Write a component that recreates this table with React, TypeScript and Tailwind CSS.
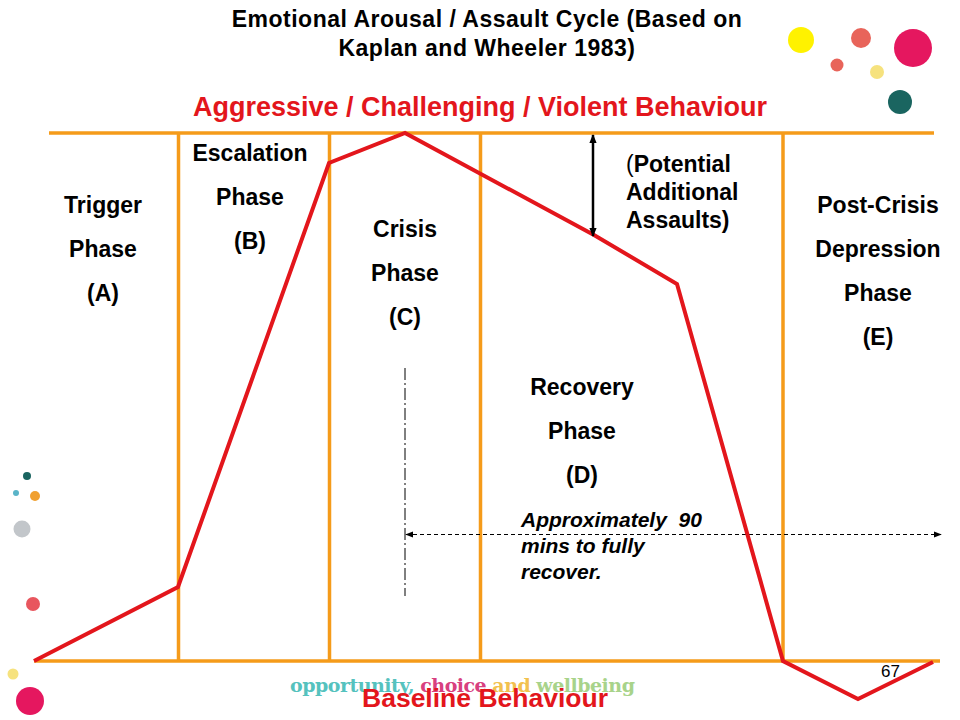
import React from "react";

export default function App() {
  return (
    <div className="relative w-[960px] h-[720px] bg-white overflow-hidden font-['Liberation_Sans',Arial,sans-serif] text-black">
      <svg className="absolute inset-0" width="960" height="720" viewBox="0 0 960 720">
        <defs>
          <marker id="ah" viewBox="0 0 10 10" refX="9" refY="5" markerWidth="8" markerHeight="8" orient="auto-start-reverse" markerUnits="userSpaceOnUse">
            <path d="M0 1 L10 5 L0 9 Z" fill="#000" />
          </marker>
          <marker id="ah2" viewBox="0 0 10 10" refX="9" refY="5" markerWidth="10" markerHeight="9" orient="auto-start-reverse" markerUnits="userSpaceOnUse">
            <path d="M0 1 L10 5 L0 9 Z" fill="#000" />
          </marker>
        </defs>
        {/* dots top right */}
        <circle cx="801" cy="40" r="13" fill="#fff200" />
        <circle cx="861" cy="38" r="10" fill="#e8645a" />
        <circle cx="837" cy="65" r="6.5" fill="#e8645a" />
        <circle cx="877" cy="72" r="7" fill="#f6e27e" />
        <ellipse cx="913" cy="48" rx="19" ry="19" fill="#e5175f" />
        <circle cx="900" cy="102" r="12" fill="#1a6560" />
        {/* dots left */}
        <circle cx="27" cy="476" r="4" fill="#1a6560" />
        <circle cx="16" cy="493" r="3" fill="#5ab4c8" />
        <circle cx="35" cy="496" r="5" fill="#f0a030" />
        <circle cx="22" cy="529" r="8.5" fill="#c2c6ca" />
        <circle cx="33" cy="604" r="7" fill="#e8565e" />
        <circle cx="13" cy="674" r="5.5" fill="#f6e27e" />
        <circle cx="30" cy="701" r="14" fill="#e5175f" />

        {/* orange frame */}
        <g stroke="#f59b1a" strokeWidth="3.5" fill="none">
          <line x1="49" y1="133" x2="934" y2="133" />
          <line x1="34" y1="661" x2="940" y2="661" />
          <line x1="178.5" y1="133" x2="178.5" y2="661" />
          <line x1="329.5" y1="133" x2="329.5" y2="661" />
          <line x1="480.5" y1="133" x2="480.5" y2="661" />
          <line x1="783" y1="133" x2="783" y2="661" />
        </g>

        {/* dash-dot vertical */}
        <line x1="405" y1="368" x2="405" y2="596" stroke="#000" strokeWidth="1" strokeDasharray="12 3 2 3" />
        {/* dashed horizontal arrow */}
        <line x1="406" y1="534.5" x2="941" y2="534.5" stroke="#000" strokeWidth="1.2" strokeDasharray="4 3" markerStart="url(#ah)" markerEnd="url(#ah)" />

        {/* red curve */}
        <polyline
          points="34,661 178,587 329,163 405,133 594,235 677,284 783,661 858,699 933,662"
          fill="none"
          stroke="#e3161c"
          strokeWidth="4"
          strokeLinejoin="miter"
        />

        {/* vertical black arrow */}
        <line x1="593" y1="135" x2="593" y2="236" stroke="#000" strokeWidth="2.5" markerStart="url(#ah2)" markerEnd="url(#ah2)" />
      </svg>

      {/* Title */}
      <div className="absolute left-0 right-0 top-[5px] pl-[14px] flex flex-col items-center text-[23px] leading-[29px] font-bold tracking-[0.5px]">
        <span>Emotional Arousal / Assault Cycle (Based on</span>
        <span>Kaplan and Wheeler 1983)</span>
      </div>

      {/* Red heading */}
      <div className="absolute left-0 right-0 top-[94px] flex justify-center text-[27px] leading-none font-bold text-[#e3161c]">
        <span>Aggressive / Challenging / Violent Behaviour</span>
      </div>

      {/* Phase labels */}
      <div className="absolute left-[103px] top-[183px] -translate-x-1/2 flex flex-col items-center text-[23px] leading-[44px] font-bold">
        <span>Trigger</span>
        <span>Phase</span>
        <span>(A)</span>
      </div>
      <div className="absolute left-[250px] top-[131px] -translate-x-1/2 flex flex-col items-center text-[23px] leading-[44px] font-bold">
        <span>Escalation</span>
        <span>Phase</span>
        <span>(B)</span>
      </div>
      <div className="absolute left-[405px] top-[207px] -translate-x-1/2 flex flex-col items-center text-[23px] leading-[44px] font-bold">
        <span>Crisis</span>
        <span>Phase</span>
        <span>(C)</span>
      </div>
      <div className="absolute left-[626px] top-[150px] flex flex-col items-start text-[23px] leading-[28px] font-bold">
        <span>
          <span className="font-normal">(</span>Potential
        </span>
        <span>Additional</span>
        <span>Assaults)</span>
      </div>
      <div className="absolute left-[878px] top-[183px] -translate-x-1/2 flex flex-col items-center text-[23px] leading-[44px] font-bold whitespace-nowrap">
        <span>Post-Crisis</span>
        <span>Depression</span>
        <span>Phase</span>
        <span>(E)</span>
      </div>
      <div className="absolute left-[582px] top-[365px] -translate-x-1/2 flex flex-col items-center text-[23px] leading-[44px] font-bold">
        <span>Recovery</span>
        <span>Phase</span>
        <span>(D)</span>
      </div>
      <div className="absolute left-[521px] top-[507px] flex flex-col items-start text-[21px] leading-[26px] font-bold italic whitespace-pre">
        <span>Approximately  90</span>
        <span>mins to fully</span>
        <span>recover.</span>
      </div>

      {/* Page number */}
      <div className="absolute left-[881px] top-[663px] text-[17px] leading-none">67</div>

      {/* Logo text */}
      <div className="absolute left-[290px] top-[676px] text-[19px] leading-none font-bold tracking-[-0.5px] whitespace-nowrap font-['DejaVu_Serif',serif]">
        <span className="text-[#55c2be]">opportunity, </span>
        <span className="text-[#d8407f]">choice </span>
        <span className="text-[#f2c14e]">and </span>
        <span className="text-[#a8d38a]">wellbeing</span>
      </div>

      {/* Baseline heading */}
      <div className="absolute left-0 right-0 top-[685px] pl-[10px] flex justify-center text-[26.5px] leading-none font-bold text-[#e3161c]">
        <span>Baseline Behaviour</span>
      </div>
    </div>
  );
}
